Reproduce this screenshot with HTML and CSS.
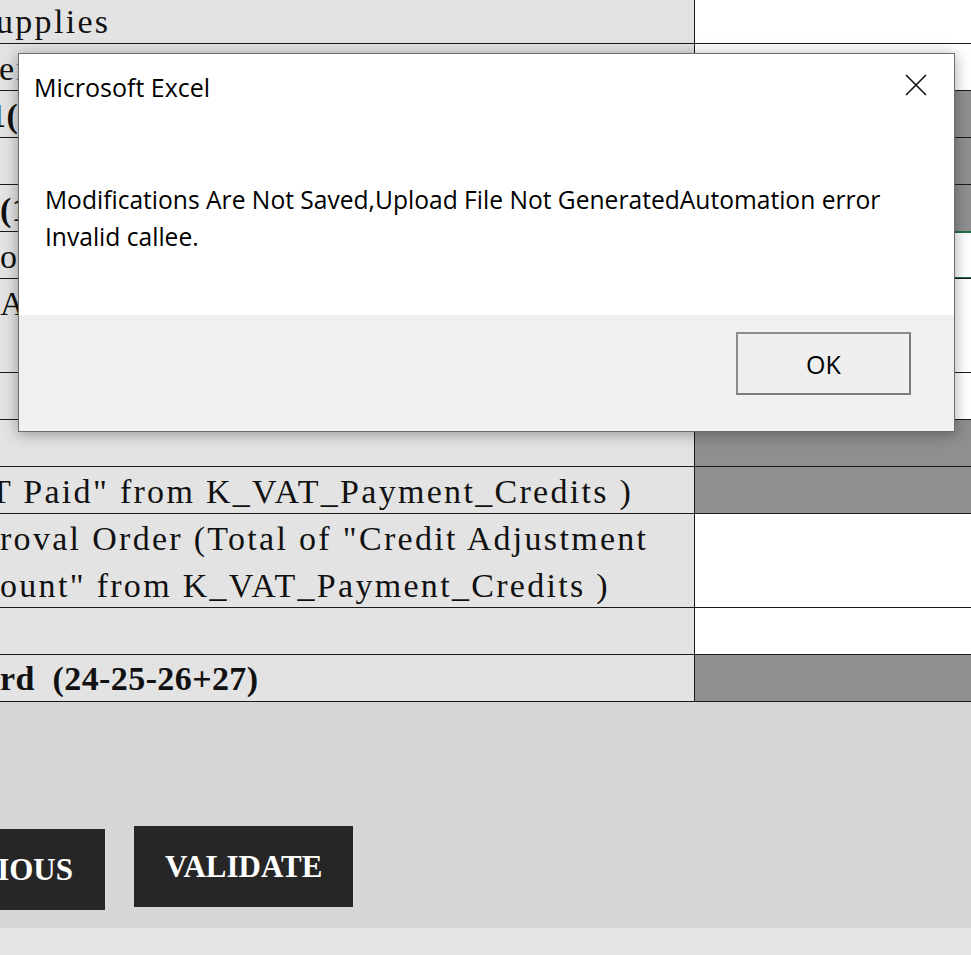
FILE: index.html
```html
<!DOCTYPE html>
<html lang="en">
<head>
  <meta charset="UTF-8" />
  <meta name="viewport" content="width=device-width, initial-scale=1.0"/>
  <title>VAT Return - Microsoft Excel</title>
  <link rel="stylesheet" href="styles.css">
</head>
<body>

  <div class="sheet">
    <div class="row">
      <div class="label cut-u">upplies</div>
      <div class="value"></div>
    </div>
    <div class="row">
      <div class="label cut-e">er</div>
      <div class="value"></div>
    </div>
    <div class="row">
      <div class="label bold cut-1">1((</div>
      <div class="value dark"></div>
    </div>
    <div class="row">
      <div class="label"></div>
      <div class="value dark"></div>
    </div>
    <div class="row">
      <div class="label bold">(1</div>
      <div class="value dark"></div>
    </div>
    <div class="row">
      <div class="label">or</div>
      <div class="value selected"></div>
    </div>
    <div class="row tall">
      <div class="label">Ar</div>
      <div class="value"></div>
    </div>
    <div class="row">
      <div class="label"></div>
      <div class="value"></div>
    </div>
    <div class="row">
      <div class="label"></div>
      <div class="value dark"></div>
    </div>
    <div class="row">
      <div class="label cut-t">T Paid" from K_VAT_Payment_Credits )</div>
      <div class="value dark"></div>
    </div>
    <div class="row tall">
      <div class="label">roval Order (Total of "Credit Adjustment<br>ount" from K_VAT_Payment_Credits )</div>
      <div class="value"></div>
    </div>
    <div class="row">
      <div class="label"></div>
      <div class="value"></div>
    </div>
    <div class="row">
      <div class="label bold total">rd&nbsp; (24-25-26+27)</div>
      <div class="value dark"></div>
    </div>
  </div>

  <div class="actions">
    <div class="sheet-btn prev"><span>PREVIOUS</span></div>
    <div class="sheet-btn">VALIDATE</div>
  </div>

  <div class="msgbox">
    <div class="msgbox-body">
      <div class="msgbox-head">
        <span class="msgbox-title">Microsoft Excel</span>
        <svg class="msgbox-close" width="22" height="22" viewBox="0 0 22 22">
          <path d="M1 1 L21 21 M21 1 L1 21" stroke="#111" stroke-width="1.6" fill="none"/>
        </svg>
      </div>
      <p class="msgbox-text">Modifications Are Not Saved,Upload File Not GeneratedAutomation error<br>Invalid callee.</p>
    </div>
    <div class="msgbox-foot">
      <button class="ok-btn">OK</button>
    </div>
  </div>

</body>
</html>
```

FILE: styles.css
```css
body {
  margin: 0;
  background: #e4e4e4;
  font-family: 'Liberation Serif', serif;
  overflow: hidden;
}

.sheet {
  margin-top: -3px;
}

.row {
  display: grid;
  grid-template-columns: 695px 1fr;
  height: 47px;
  box-sizing: border-box;
  border-bottom: 1px solid #1a1a1a;
}

.row.tall {
  height: 94px;
}

.label {
  background: #e3e3e3;
  border-right: 1px solid #1a1a1a;
  overflow: hidden;
  white-space: nowrap;
  font-size: 34px;
  letter-spacing: 2.3px;
  line-height: 47px;
  padding-top: 1px;
  color: #111;
}

.label.bold {
  font-weight: bold;
  letter-spacing: 0.4px;
}

.label.total {
  padding-top: 0;
}

.cut-u { text-indent: -4px; }
.cut-e { text-indent: -1px; }
.cut-1 { text-indent: -11px; }
.cut-t { text-indent: -10px; }

.value {
  background: #fff;
}

.value.dark {
  background: #8f8f8f;
}

.value.selected {
  box-shadow: inset 0 1px #217346, inset 0 -1px #217346;
  border-top: 1px solid #217346;
  margin-top: -1px;
}

.actions {
  height: 226px;
  background: #d6d6d6;
  display: flex;
  align-items: flex-start;
  gap: 29px;
  padding-top: 124px;
  box-sizing: border-box;
}

.sheet-btn {
  background: #262626;
  color: #fff;
  font-family: 'Liberation Serif', serif;
  font-weight: bold;
  font-size: 31px;
  height: 81px;
  line-height: 81px;
  padding: 0 31px;
  white-space: nowrap;
}

.sheet-btn.prev {
  width: 105px;
  box-sizing: border-box;
  padding: 0 32px 0 0;
  margin-top: 3px;
  display: flex;
  justify-content: flex-end;
  overflow: hidden;
}

.msgbox {
  position: absolute;
  left: 18px;
  top: 53px;
  width: 937px;
  height: 379px;
  box-sizing: border-box;
  border: 1px solid #6e6e6e;
  background: #fff;
  box-shadow: 0 2px 14px rgba(0,0,0,0.35);
  display: flex;
  flex-direction: column;
  font-family: 'Open Sans', sans-serif;
  font-size: 25px;
  color: #000;
}

.msgbox-body {
  flex: 1;
  background: #fff;
}

.msgbox-head {
  display: flex;
  justify-content: space-between;
  align-items: center;
  padding: 15px 27px 0 15px;
  height: 36px;
}

.msgbox-title {
  line-height: 36px;
}

.msgbox-close {
  margin-top: -4px;
}

.msgbox-text {
  margin: 76px 0 0 26px;
  font-size: 24.6px;
  line-height: 37px;
}

.msgbox-foot {
  height: 116px;
  background: #f0f0f0;
  display: flex;
  justify-content: flex-end;
  align-items: flex-start;
  padding: 17px 43px 0 0;
  box-sizing: border-box;
}

.ok-btn {
  width: 175px;
  height: 63px;
  background: #efefef;
  border: 2px solid #7c7c7c;
  border-top-color: #8c8c8c;
  border-left-color: #8c8c8c;
  font-family: 'Open Sans', sans-serif;
  font-size: 25px;
  color: #000;
  padding: 0;
}
```
